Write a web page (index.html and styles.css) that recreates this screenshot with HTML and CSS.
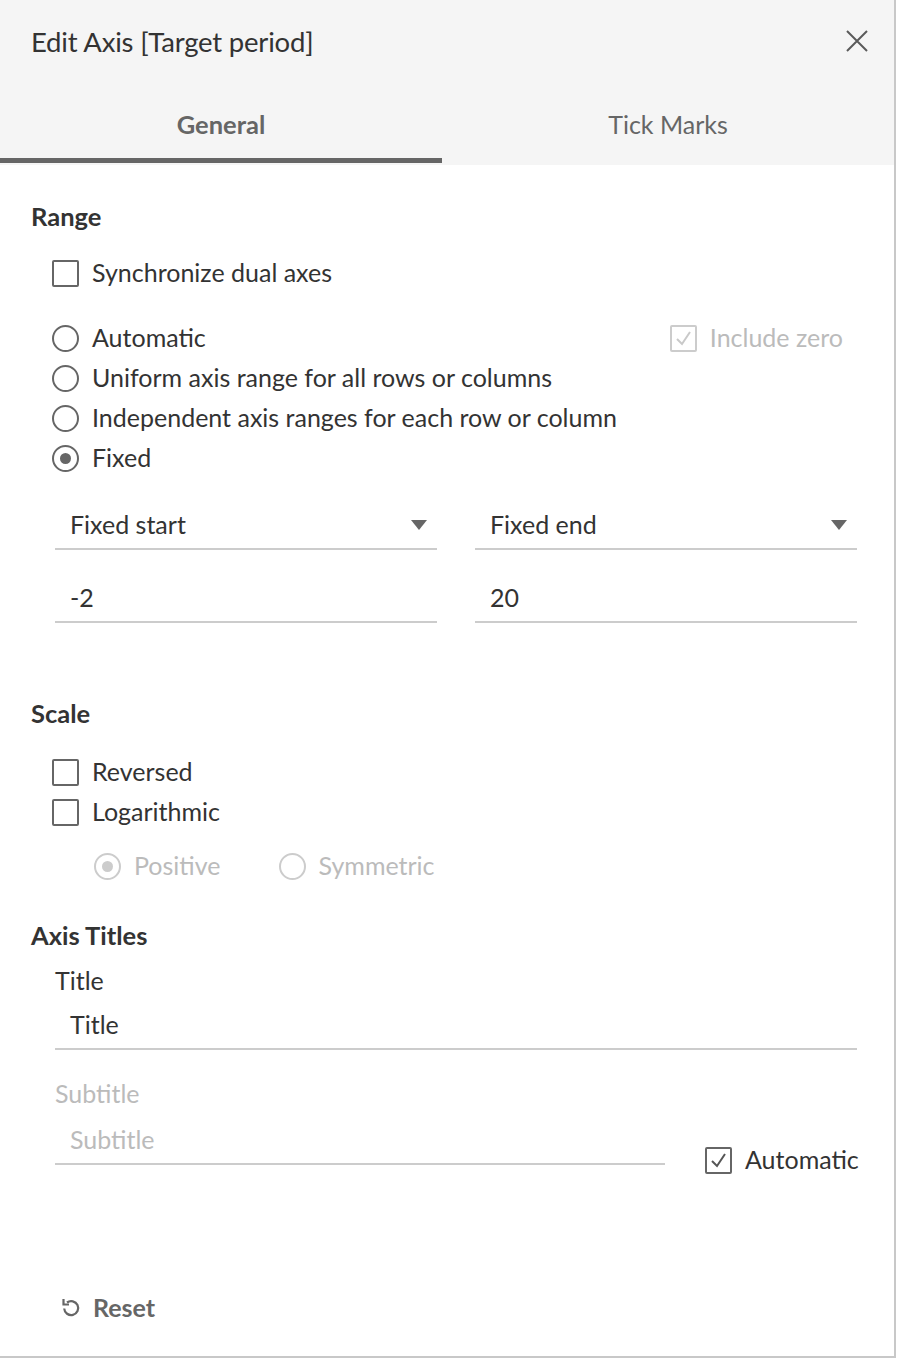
FILE: index.html
```html
<!DOCTYPE html>
<html>
<head>
<meta charset="utf-8">
<link rel="stylesheet" href="styles.css">
</head>
<body>
<div class="dialog">
  <div class="header">
    <div class="titlebar">
      <div class="title">Edit Axis [Target period]</div>
      <svg class="close" width="22" height="22" viewBox="0 0 22 22"><path d="M1 1 L21 21 M21 1 L1 21" stroke="#5a5a5a" stroke-width="2" fill="none"/></svg>
    </div>
    <div class="tabs">
      <div class="tab active">General</div>
      <div class="tab">Tick Marks</div>
    </div>
  </div>

  <div class="content">
    <div class="heading h-range">Range</div>
    <div class="row sync"><span class="cb"></span><span class="txt">Synchronize dual axes</span></div>

    <div class="radios">
      <div class="row-wrap">
        <div class="row"><span class="rb"></span><span class="txt">Automatic</span></div>
        <div class="row disabled"><span class="cb checked light"><svg width="19" height="17" viewBox="0 0 19 17"><path d="M3 9 L8 14 L16 2" stroke="#c9c9c9" stroke-width="2" fill="none"/></svg></span><span class="txt">Include zero</span></div>
      </div>
      <div class="row"><span class="rb"></span><span class="txt">Uniform axis range for all rows or columns</span></div>
      <div class="row"><span class="rb"></span><span class="txt">Independent axis ranges for each row or column</span></div>
      <div class="row"><span class="rb on"></span><span class="txt">Fixed</span></div>
    </div>

    <div class="fields">
      <div class="field select"><span class="txt">Fixed start</span><span class="arrow"></span></div>
      <div class="field select"><span class="txt">Fixed end</span><span class="arrow"></span></div>
      <div class="field input"><span class="txt">-2</span></div>
      <div class="field input"><span class="txt">20</span></div>
    </div>

    <div class="heading h-scale">Scale</div>
    <div class="row rev"><span class="cb"></span><span class="txt">Reversed</span></div>
    <div class="row"><span class="cb"></span><span class="txt">Logarithmic</span></div>
    <div class="row sub disabled">
      <span class="opt"><span class="rb on light"></span><span class="txt">Positive</span></span>
      <span class="opt"><span class="rb light"></span><span class="txt">Symmetric</span></span>
    </div>

    <div class="heading h-titles">Axis Titles</div>
    <div class="label">Title</div>
    <div class="field wide input"><span class="txt">Title</span></div>
    <div class="label muted sublabel">Subtitle</div>
    <div class="subrow">
      <div class="field subfield input muted"><span class="txt">Subtitle</span></div>
      <div class="row auto"><span class="cb checked"><svg width="19" height="17" viewBox="0 0 19 17"><path d="M3 9 L8 14 L16 2" stroke="#555" stroke-width="2" fill="none"/></svg></span><span class="txt">Automatic</span></div>
    </div>
  </div>

  <div class="footer">
    <svg class="reset-icon" width="20" height="22" viewBox="0 0 20 22"><path d="M6 5.5 A7 7 0 1 1 3.2 11.5" stroke="#666" stroke-width="2.2" fill="none"/><path d="M2.5 2 L2.5 7.5 L8 7.5" stroke="#666" stroke-width="2.2" fill="none" stroke-linejoin="miter"/></svg>
    <span class="reset">Reset</span>
  </div>
</div>
</body>
</html>
```

FILE: styles.css
```css
* { box-sizing: border-box; }
html, body { margin: 0; padding: 0; background: #ffffff; }
body {
  font-family: Lato, "Noto Sans", sans-serif;
  color: #333333;
  width: 898px;
  height: 1358px;
  overflow: hidden;
}
.dialog {
  width: 896px;
  height: 1358px;
  border-right: 2px solid #c8c8c8;
  border-bottom: 2px solid #c8c8c8;
  display: flex;
  flex-direction: column;
  background: #fff;
}
.header {
  background: #f5f5f5;
  height: 165px;
}
.titlebar {
  height: 82px;
  display: flex;
  align-items: center;
  justify-content: space-between;
  padding: 0 26px 0 31px;
}
.title {
  font-size: 27.5px;
  color: #333;
  letter-spacing: -0.2px;
}
.close { display: block; margin-top: -1px; }
.tabs {
  display: flex;
  height: 81px;
}
.tab {
  width: 442px;
  text-align: center;
  font-size: 25px;
  color: #666;
  padding-top: 8px;
  line-height: 68px;
  border-bottom: 5px solid transparent;
}
.tab + .tab { width: 452px; }
.tab.active {
  font-weight: 700;
  font-size: 25.5px;
  border-bottom-color: #666;
}
.content {
  padding: 36px 0 0 31px;
}
.heading {
  font-size: 25.5px;
  font-weight: 700;
  line-height: 30px;
  color: #333;
}
.txt { padding-bottom: 3px; }
.row {
  display: flex;
  align-items: center;
  height: 40px;
  font-size: 25px;
  padding-left: 21px;
  gap: 13px;
}
.sync { margin-top: 22px; }
.cb {
  width: 27px;
  height: 27px;
  border: 2px solid #666;
  border-radius: 2px;
  flex: none;
  display: flex;
  align-items: center;
  justify-content: center;
}
.cb.light { border-color: #cccccc; }
.rb {
  width: 27px;
  height: 27px;
  border: 2px solid #666;
  border-radius: 50%;
  flex: none;
  display: flex;
  align-items: center;
  justify-content: center;
}
.rb.on::after {
  content: "";
  width: 11px;
  height: 11px;
  border-radius: 50%;
  background: #666;
}
.rb.light { border-color: #cccccc; }
.rb.light.on::after { background: #cccccc; }
.disabled { color: #bbbbbb; }
.radios { margin-top: 25px; }
.row-wrap {
  display: flex;
  justify-content: space-between;
  padding-right: 51px;
}
.fields {
  display: grid;
  grid-template-columns: 382px 382px;
  column-gap: 38px;
  row-gap: 25px;
  margin: 24px 0 0 24px;
}
.field {
  height: 48px;
  border-bottom: 2px solid #cccccc;
  display: flex;
  align-items: center;
  justify-content: space-between;
  padding: 0 10px 0 15px;
  font-size: 25px;
  color: #333;
}
.arrow {
  width: 0;
  height: 0;
  border-left: 8px solid transparent;
  border-right: 8px solid transparent;
  border-top: 10px solid #666;
  margin-top: 0;
}
.h-scale { margin-top: 75px; }
.rev { margin-top: 24px; }
.sub {
  margin-top: 14px;
  padding-left: 63px;
  gap: 58px;
}
.opt {
  display: flex;
  align-items: center;
  gap: 13px;
}
.h-titles { margin-top: 34px; }
.label {
  font-size: 25px;
  line-height: 30px;
  margin: 15px 0 0 24px;
  color: #333;
}
.label.muted { color: #bbbbbb; }
.sublabel { margin-top: 28px; }
.wide {
  width: 802px;
  margin: 7px 0 0 24px;
}
.subrow {
  display: flex;
  align-items: flex-start;
  margin: 9px 0 0 24px;
}
.subfield { width: 610px; }
.field.muted { color: #bbbbbb; }
.auto {
  margin-top: 23px;
  padding-left: 40px;
}
.footer {
  margin-top: auto;
  margin-bottom: 28px;
  height: 40px;
  display: flex;
  align-items: center;
  padding-left: 61px;
  gap: 12px;
}
.reset-icon { display: block; }
.reset {
  font-size: 25px;
  font-weight: 700;
  color: #666;
  padding-bottom: 2px;
}
```
